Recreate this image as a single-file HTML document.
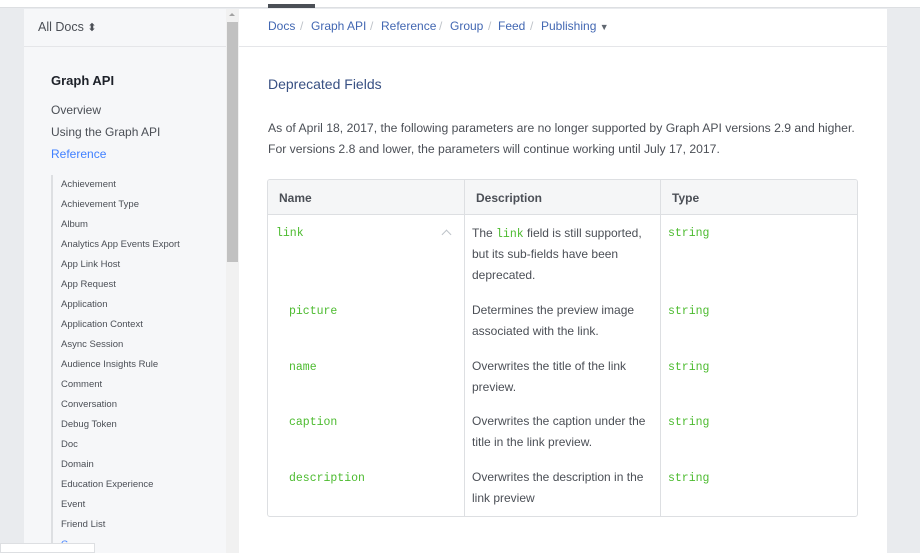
<!DOCTYPE html>
<html><head><meta charset="utf-8"><style>
*{margin:0;padding:0;box-sizing:border-box}
body{width:920px;height:553px;overflow:hidden;background:#e9ebee;font-family:"Liberation Sans",Arial,sans-serif;position:relative}
.abs{position:absolute}
.top{left:0;top:0;width:920px;height:8px;background:#fff;border-bottom:1px solid #dddfe2}
.side{left:24px;top:9px;width:202px;height:544px;background:#f6f7f9}
.sb{left:226px;top:9px;width:13px;height:544px;background:#f1f1f1}
.thumb{left:227px;top:22px;width:11px;height:240px;background:#c1c1c1}
.main{left:239px;top:9px;width:648px;height:544px;background:#fff}
.mono{font-family:"Liberation Mono",monospace;color:#4cbb2f;line-height:1}
.item{left:61px;font-size:9.5px;color:#4b4f56}
.bc{position:absolute;top:19px;font-size:12px;color:#4267b2;white-space:nowrap}
.sp{position:absolute;top:19px;font-size:12px;color:#bec3c9}
</style></head><body>
<div class="abs top"></div>
<div class="abs" style="left:268px;top:4px;width:47px;height:4px;background:#4b4f56"></div>
<div class="abs side"></div>
<div class="abs" style="left:24px;top:46px;width:202px;height:1px;background:#e5e6e9"></div>
<div class="abs" style="left:38px;top:20px;font-size:12.5px;color:#4b4f56">All Docs <span style="font-size:11px">&#x2B0D;</span></div>
<div class="abs" style="left:51px;top:73px;font-size:13px;font-weight:bold;color:#1d2129">Graph API</div>
<div class="abs" style="left:51px;top:103px;font-size:12px;color:#4b4f56">Overview</div>
<div class="abs" style="left:51px;top:125px;font-size:12px;color:#4b4f56">Using the Graph API</div>
<div class="abs" style="left:51px;top:147px;font-size:12px;color:#4080ff">Reference</div>
<div class="abs" style="left:51px;top:175px;width:2px;height:378px;background:#dddfe2"></div>
<div class="abs item" style="top:179px">Achievement</div>
<div class="abs item" style="top:199px">Achievement Type</div>
<div class="abs item" style="top:219px">Album</div>
<div class="abs item" style="top:239px">Analytics App Events Export</div>
<div class="abs item" style="top:259px">App Link Host</div>
<div class="abs item" style="top:279px">App Request</div>
<div class="abs item" style="top:299px">Application</div>
<div class="abs item" style="top:319px">Application Context</div>
<div class="abs item" style="top:339px">Async Session</div>
<div class="abs item" style="top:359px">Audience Insights Rule</div>
<div class="abs item" style="top:379px">Comment</div>
<div class="abs item" style="top:399px">Conversation</div>
<div class="abs item" style="top:419px">Debug Token</div>
<div class="abs item" style="top:439px">Doc</div>
<div class="abs item" style="top:459px">Domain</div>
<div class="abs item" style="top:479px">Education Experience</div>
<div class="abs item" style="top:499px">Event</div>
<div class="abs item" style="top:519px">Friend List</div>
<div class="abs item" style="top:539px;color:#4080ff">G</div>
<div class="abs" style="left:0;top:543px;width:95px;height:10px;background:#fff;border:1px solid #dddfe2"></div>
<div class="abs sb"></div>
<div class="abs" style="left:229px;top:13px;width:0;height:0;border-left:3px solid transparent;border-right:3px solid transparent;border-bottom:3px solid #a3a3a3"></div>
<div class="abs thumb"></div>
<div class="abs main"></div>
<div class="abs" style="left:239px;top:46px;width:648px;height:1px;background:#e5e6e9"></div>
<div class="bc" style="left:268px">Docs</div>
<div class="sp" style="left:300px">/</div>
<div class="bc" style="left:311px">Graph API</div>
<div class="sp" style="left:370px">/</div>
<div class="bc" style="left:381px">Reference</div>
<div class="sp" style="left:439px">/</div>
<div class="bc" style="left:450px">Group</div>
<div class="sp" style="left:488px">/</div>
<div class="bc" style="left:498px">Feed</div>
<div class="sp" style="left:530px">/</div>
<div class="bc" style="left:541px">Publishing <span style="font-size:9px;color:#606770">&#9660;</span></div>
<div class="abs" style="left:268px;top:76px;font-size:14px;color:#385083">Deprecated Fields</div>
<div class="abs" style="left:268px;top:118px;font-size:12.2px;line-height:21px;color:#4b4f56;white-space:nowrap">As of April 18, 2017, the following parameters are no longer supported by Graph API versions 2.9 and higher.<br>For versions 2.8 and lower, the parameters will continue working until July 17, 2017.</div>
<div class="abs" style="left:267px;top:179px;width:591px;height:338px;border:1px solid #dddfe2;border-radius:3px;overflow:hidden">
<div class="abs" style="left:0;top:0;width:591px;height:35px;background:#f5f6f7;border-bottom:1px solid #dddfe2"></div>
<div class="abs" style="left:196px;top:0;width:1px;height:338px;background:#dddfe2"></div>
<div class="abs" style="left:392px;top:0;width:1px;height:338px;background:#dddfe2"></div>
<div class="abs" style="left:11px;top:11px;font-size:12px;font-weight:bold;color:#4b4f56">Name</div>
<div class="abs" style="left:208px;top:11px;font-size:12px;font-weight:bold;color:#4b4f56">Description</div>
<div class="abs" style="left:404px;top:11px;font-size:12px;font-weight:bold;color:#4b4f56">Type</div>
<div class="abs mono" style="left:8px;top:48px;font-size:11.5px">link</div>
<div class="abs" style="left:175px;top:51px;width:7px;height:7px;border-left:1.3px solid #bec3c9;border-top:1.3px solid #bec3c9;transform:rotate(45deg)"></div>
<div class="abs" style="left:204px;top:43px;width:182px;font-size:12px;line-height:21px;color:#4b4f56">The <span class="mono" style="font-size:11.5px">link</span> field is still supported, but its sub-fields have been deprecated.</div>
<div class="abs mono" style="left:400px;top:48px;font-size:11.5px">string</div>

<div class="abs mono" style="left:21px;top:126px;font-size:11.5px">picture</div>
<div class="abs" style="left:204px;top:120px;width:182px;font-size:12px;line-height:21px;color:#4b4f56">Determines the preview image associated with the link.</div>
<div class="abs mono" style="left:400px;top:126px;font-size:11.5px">string</div>

<div class="abs mono" style="left:21px;top:182px;font-size:11.5px">name</div>
<div class="abs" style="left:204px;top:176px;width:182px;font-size:12px;line-height:21px;color:#4b4f56">Overwrites the title of the link preview.</div>
<div class="abs mono" style="left:400px;top:182px;font-size:11.5px">string</div>

<div class="abs mono" style="left:21px;top:237px;font-size:11.5px">caption</div>
<div class="abs" style="left:204px;top:231px;width:182px;font-size:12px;line-height:21px;color:#4b4f56">Overwrites the caption under the title in the link preview.</div>
<div class="abs mono" style="left:400px;top:237px;font-size:11.5px">string</div>

<div class="abs mono" style="left:21px;top:293px;font-size:11.5px">description</div>
<div class="abs" style="left:204px;top:287px;width:182px;font-size:12px;line-height:21px;color:#4b4f56">Overwrites the description in the link preview</div>
<div class="abs mono" style="left:400px;top:293px;font-size:11.5px">string</div>
</div>
</body></html>
